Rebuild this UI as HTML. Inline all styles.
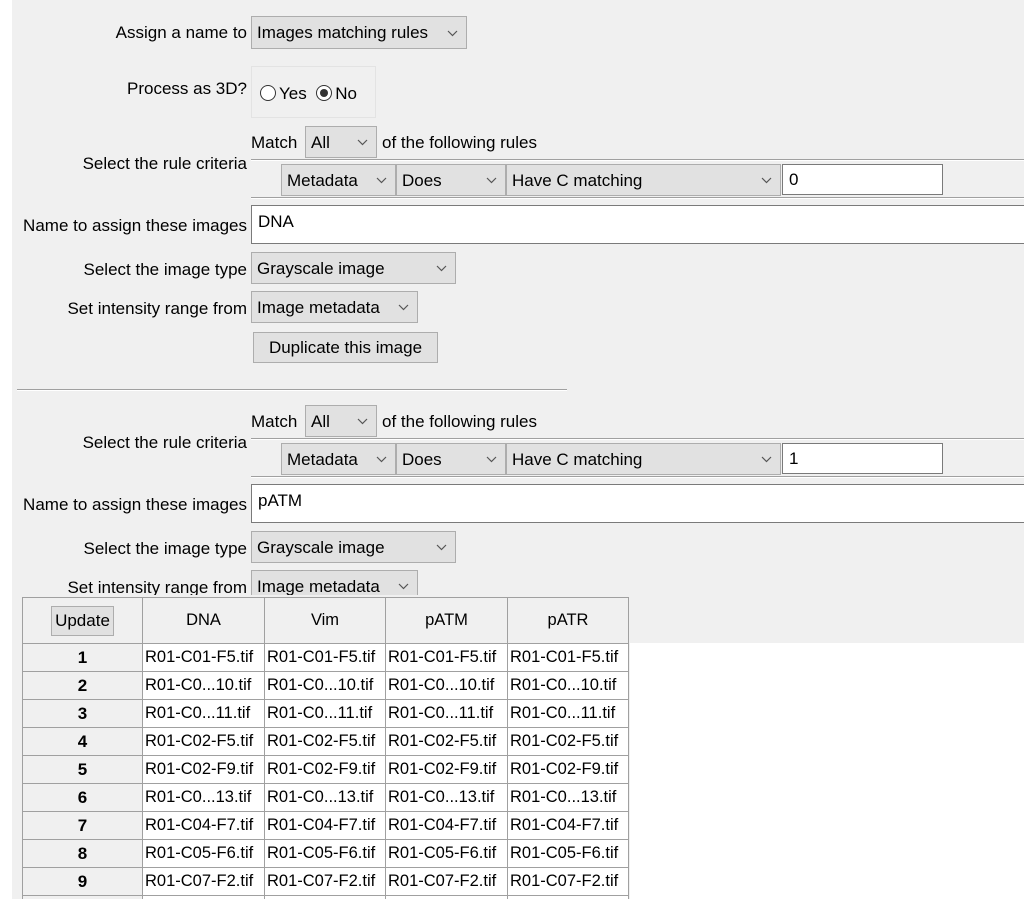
<!DOCTYPE html>
<html style="height:899px;overflow:hidden"><head><meta charset="utf-8"><style>
*{box-sizing:border-box;margin:0;padding:0}
body{width:1024px;height:899px;overflow:hidden;background:#fff;font-family:"Liberation Sans",sans-serif;font-size:17px;color:#000;position:relative}
.bg{position:absolute;left:12px;top:0;width:1012px;height:899px;background:#f0f0f0}
.form{position:absolute;left:0;top:0;width:1024px;height:595px;overflow:hidden}
.a{position:absolute;white-space:nowrap}
.lbl{position:absolute;white-space:nowrap;text-align:right;width:247px;left:0}
.sel{position:absolute;background:#e1e1e1;border:1px solid #adadad;padding-left:5px;padding-top:1px;display:flex;align-items:center;white-space:nowrap}
.sel svg{position:absolute;right:8px;top:50%;margin-top:-3px}
.inp{position:absolute;background:#fff;border:1px solid #7a7a7a;padding-left:6px;padding-top:6px;white-space:nowrap}
.hl{position:absolute;height:2px;border-top:1px solid #a0a0a0;border-bottom:1px solid #fff}
.btn{position:absolute;background:#e1e1e1;border:1px solid #adadad;display:flex;align-items:center;justify-content:center}
.rad{display:inline-block;width:16px;height:16px;border:1px solid #333;border-radius:50%;background:#fff;vertical-align:-2px;position:relative;margin-right:3px}
.rad.on::after{content:"";position:absolute;left:3px;top:3px;width:8px;height:8px;border-radius:50%;background:#333}
table{position:absolute;left:22px;top:597px;border-collapse:collapse;font-size:16.5px;table-layout:fixed}
td,th{border:1px solid #a0a0a0;height:28px;padding:0 2px;white-space:nowrap;font-weight:normal;overflow:hidden}
th{background:#f0f0f0;height:46px;text-align:center}
td.h{background:#f0f0f0;font-weight:bold;text-align:center;font-size:17px}
td{background:#fff}
</style></head><body>
<div class="bg"></div>
<div class="form">
<div class="lbl" style="top:23px">Assign a name to</div>
<div class="sel" style="left:251px;top:16px;width:216px;height:33px">Images matching rules<svg width="11" height="7"><polyline points="1,1 5.5,5.5 10,1" fill="none" stroke="#555" stroke-width="1.2"/></svg></div>
<div class="lbl" style="top:79px">Process as 3D?</div>
<div class="a" style="left:251px;top:66px;width:125px;height:52px;border:1px solid #e3e3e3"></div>
<div class="a" style="left:260px;top:84px"><span class="rad"></span>Yes&nbsp;&nbsp;<span class="rad on"></span>No</div>

<div class="a" style="left:251px;top:133px">Match</div>
<div class="sel" style="left:305px;top:126px;width:72px;height:32px">All<svg width="11" height="7"><polyline points="1,1 5.5,5.5 10,1" fill="none" stroke="#555" stroke-width="1.2"/></svg></div>
<div class="a" style="left:382px;top:133px">of the following rules</div>
<div class="hl" style="left:251px;top:159px;width:773px"></div>
<div class="lbl" style="top:154px">Select the rule criteria</div>
<div class="sel" style="left:281px;top:164px;width:115px;height:32px">Metadata<svg width="11" height="7"><polyline points="1,1 5.5,5.5 10,1" fill="none" stroke="#555" stroke-width="1.2"/></svg></div>
<div class="sel" style="left:396px;top:164px;width:110px;height:32px">Does<svg width="11" height="7"><polyline points="1,1 5.5,5.5 10,1" fill="none" stroke="#555" stroke-width="1.2"/></svg></div>
<div class="sel" style="left:506px;top:164px;width:275px;height:32px">Have C matching<svg width="11" height="7"><polyline points="1,1 5.5,5.5 10,1" fill="none" stroke="#555" stroke-width="1.2"/></svg></div>
<div class="inp" style="left:782px;top:164px;width:161px;height:31px;padding-top:5px">0</div>
<div class="hl" style="left:251px;top:197px;width:773px"></div>
<div class="lbl" style="top:216px">Name to assign these images</div>
<div class="inp" style="left:251px;top:205px;width:790px;height:39px">DNA</div>
<div class="lbl" style="top:260px">Select the image type</div>
<div class="sel" style="left:251px;top:252px;width:205px;height:32px">Grayscale image<svg width="11" height="7"><polyline points="1,1 5.5,5.5 10,1" fill="none" stroke="#555" stroke-width="1.2"/></svg></div>
<div class="lbl" style="top:299px">Set intensity range from</div>
<div class="sel" style="left:251px;top:291px;width:167px;height:32px">Image metadata<svg width="11" height="7"><polyline points="1,1 5.5,5.5 10,1" fill="none" stroke="#555" stroke-width="1.2"/></svg></div>
<div class="btn" style="left:253px;top:332px;width:185px;height:31px">Duplicate this image</div>
<div class="hl" style="left:17px;top:389px;width:550px"></div>

<div class="a" style="left:251px;top:412px">Match</div>
<div class="sel" style="left:305px;top:405px;width:72px;height:32px">All<svg width="11" height="7"><polyline points="1,1 5.5,5.5 10,1" fill="none" stroke="#555" stroke-width="1.2"/></svg></div>
<div class="a" style="left:382px;top:412px">of the following rules</div>
<div class="hl" style="left:251px;top:438px;width:773px"></div>
<div class="lbl" style="top:433px">Select the rule criteria</div>
<div class="sel" style="left:281px;top:443px;width:115px;height:32px">Metadata<svg width="11" height="7"><polyline points="1,1 5.5,5.5 10,1" fill="none" stroke="#555" stroke-width="1.2"/></svg></div>
<div class="sel" style="left:396px;top:443px;width:110px;height:32px">Does<svg width="11" height="7"><polyline points="1,1 5.5,5.5 10,1" fill="none" stroke="#555" stroke-width="1.2"/></svg></div>
<div class="sel" style="left:506px;top:443px;width:275px;height:32px">Have C matching<svg width="11" height="7"><polyline points="1,1 5.5,5.5 10,1" fill="none" stroke="#555" stroke-width="1.2"/></svg></div>
<div class="inp" style="left:782px;top:443px;width:161px;height:31px;padding-top:5px">1</div>
<div class="hl" style="left:251px;top:476px;width:773px"></div>
<div class="lbl" style="top:495px">Name to assign these images</div>
<div class="inp" style="left:251px;top:484px;width:790px;height:39px">pATM</div>
<div class="lbl" style="top:539px">Select the image type</div>
<div class="sel" style="left:251px;top:531px;width:205px;height:32px">Grayscale image<svg width="11" height="7"><polyline points="1,1 5.5,5.5 10,1" fill="none" stroke="#555" stroke-width="1.2"/></svg></div>
<div class="lbl" style="top:578px">Set intensity range from</div>
<div class="sel" style="left:251px;top:570px;width:167px;height:32px">Image metadata<svg width="11" height="7"><polyline points="1,1 5.5,5.5 10,1" fill="none" stroke="#555" stroke-width="1.2"/></svg></div>
</div>

<div class="a" style="left:630px;top:643px;width:394px;height:256px;background:#fff"></div>
<table>
<colgroup><col style="width:120px"><col style="width:122px"><col style="width:121px"><col style="width:122px"><col style="width:121px"></colgroup>
<tr><th><span style="display:inline-block;background:#e1e1e1;border:1px solid #adadad;padding:4px 3px;font-size:17px">Update</span></th><th>DNA</th><th>Vim</th><th>pATM</th><th>pATR</th></tr>
<tr><td class="h">1</td><td>R01-C01-F5.tif</td><td>R01-C01-F5.tif</td><td>R01-C01-F5.tif</td><td>R01-C01-F5.tif</td></tr>
<tr><td class="h">2</td><td>R01-C0...10.tif</td><td>R01-C0...10.tif</td><td>R01-C0...10.tif</td><td>R01-C0...10.tif</td></tr>
<tr><td class="h">3</td><td>R01-C0...11.tif</td><td>R01-C0...11.tif</td><td>R01-C0...11.tif</td><td>R01-C0...11.tif</td></tr>
<tr><td class="h">4</td><td>R01-C02-F5.tif</td><td>R01-C02-F5.tif</td><td>R01-C02-F5.tif</td><td>R01-C02-F5.tif</td></tr>
<tr><td class="h">5</td><td>R01-C02-F9.tif</td><td>R01-C02-F9.tif</td><td>R01-C02-F9.tif</td><td>R01-C02-F9.tif</td></tr>
<tr><td class="h">6</td><td>R01-C0...13.tif</td><td>R01-C0...13.tif</td><td>R01-C0...13.tif</td><td>R01-C0...13.tif</td></tr>
<tr><td class="h">7</td><td>R01-C04-F7.tif</td><td>R01-C04-F7.tif</td><td>R01-C04-F7.tif</td><td>R01-C04-F7.tif</td></tr>
<tr><td class="h">8</td><td>R01-C05-F6.tif</td><td>R01-C05-F6.tif</td><td>R01-C05-F6.tif</td><td>R01-C05-F6.tif</td></tr>
<tr><td class="h">9</td><td>R01-C07-F2.tif</td><td>R01-C07-F2.tif</td><td>R01-C07-F2.tif</td><td>R01-C07-F2.tif</td></tr>
<tr><td class="h">10</td><td>R01-C07-F8.tif</td><td>R01-C07-F8.tif</td><td>R01-C07-F8.tif</td><td>R01-C07-F8.tif</td></tr>
</table>
</body></html>
